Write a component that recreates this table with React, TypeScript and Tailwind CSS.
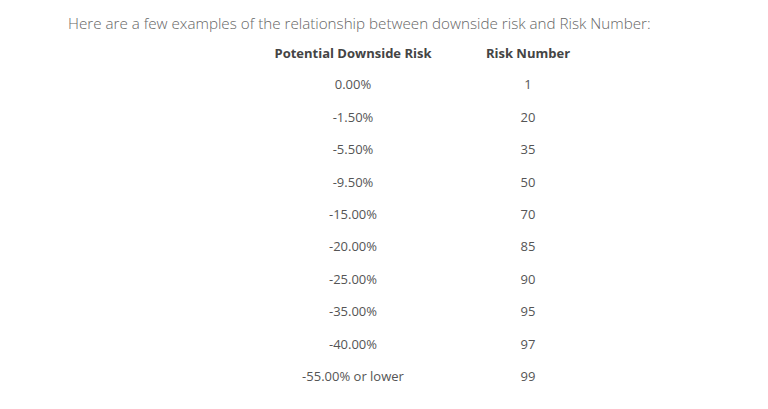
const rows: [string, string][] = [
  ['0.00%', '1'],
  ['-1.50%', '20'],
  ['-5.50%', '35'],
  ['-9.50%', '50'],
  ['-15.00%', '70'],
  ['-20.00%', '85'],
  ['-25.00%', '90'],
  ['-35.00%', '95'],
  ['-40.00%', '97'],
  ['-55.00% or lower', '99'],
];

export default function App() {
  return (
    <div className="w-[768px] h-[409px] bg-white font-['Open_Sans',sans-serif] text-[#555]">
      <p className="pl-[68px] pt-[11px] text-[15.2px] leading-[24px] font-light text-[#666]">
        Here are a few examples of the relationship between downside risk and Risk Number:
      </p>
      <table className="ml-[258px] mt-[4px] border-collapse text-[13px]">
        <thead>
          <tr className="h-[30px]">
            <th className="w-[190px] text-center font-bold text-[#444]">Potential Downside Risk</th>
            <th className="w-[160px] text-center font-bold text-[#444]">Risk Number</th>
          </tr>
        </thead>
        <tbody>
          {rows.map(([risk, num]) => (
            <tr key={risk} className="h-[32.4px]">
              <td className="text-center">{risk}</td>
              <td className="text-center">{num}</td>
            </tr>
          ))}
        </tbody>
      </table>
    </div>
  );
}
